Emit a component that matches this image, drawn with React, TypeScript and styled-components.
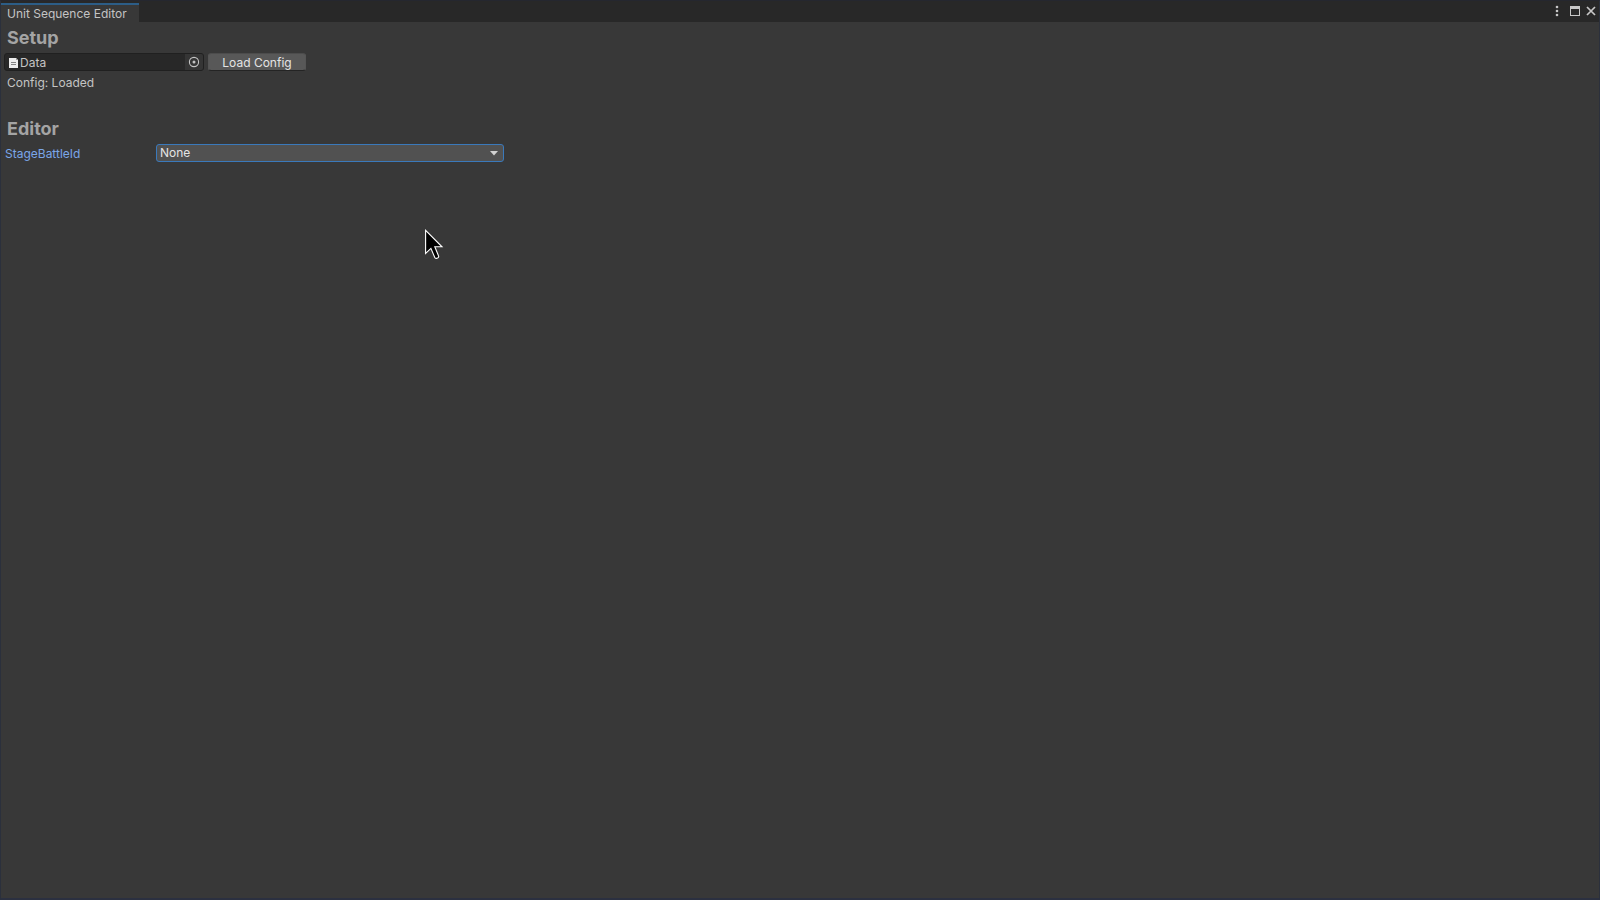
import React, { useState } from "react";
import styled, { createGlobalStyle } from "styled-components";

const GlobalStyle = createGlobalStyle`
  * { box-sizing: border-box; }
  body {
    margin: 0;
    background: #383838;
    color: #c4c4c4;
    font-family: Inter, "Liberation Sans", sans-serif;
    font-size: 12px;
    line-height: 18px;
  }
  button, input, select { font: inherit; color: inherit; margin: 0; }
`;

const Window = styled.main`
  display: flex;
  flex-direction: column;
  min-height: 100vh;
  border: 1px solid #2b303c;
  border-top-color: #25272f;
  border-bottom: 2px solid #2b3040;
`;

const TitleBar = styled.header`
  display: flex;
  justify-content: space-between;
  height: 21px;
  background: #282828;
`;

const Tab = styled.button`
  align-self: flex-end;
  height: 19px;
  width: 138px;
  padding: 0 6px;
  border: 0;
  border-top: 2px solid #2c5d87;
  background: #383838;
  text-align: left;
  line-height: 17px;
  white-space: nowrap;
`;

const WindowControls = styled.div`
  display: flex;
  align-items: flex-start;
`;

const WindowButton = styled.button`
  display: flex;
  align-items: center;
  justify-content: center;
  width: 17px;
  height: 20px;
  padding: 0;
  border: 0;
  background: none;
`;

const Section = styled.section`
  display: flex;
  flex-direction: column;
  padding: 4px 3px 21px;
`;

const Heading = styled.h2`
  margin: 0 0 3px;
  padding: 0 3px;
  color: #a4a4a4;
  font-size: 18px;
  font-weight: 700;
  line-height: 24px;
`;

const Row = styled.div`
  display: flex;
  align-items: center;
  gap: 4px;
`;

const ObjectField = styled.div`
  display: flex;
  align-items: center;
  width: 200px;
  height: 18px;
  padding-left: 4px;
  border: 1px solid #202020;
  border-radius: 3px;
  background: #282828;
`;

const ObjectInput = styled.input`
  flex: 1;
  min-width: 0;
  height: 16px;
  padding: 1px 2px 0;
  border: 0;
  outline: 0;
  background: none;
  line-height: 15px;
`;

const PickerButton = styled.button`
  display: flex;
  align-items: center;
  justify-content: center;
  width: 18px;
  height: 16px;
  padding: 0;
  border: 0;
  border-radius: 0 2px 2px 0;
  background: #353535;
`;

const ActionButton = styled.button`
  width: 98px;
  height: 18px;
  padding: 2px 0 0;
  border: 1px solid #555555;
  border-top-color: #4c4c4c;
  border-bottom-color: #242424;
  border-radius: 3px;
  background: #585858;
  color: #e4e4e4;
  line-height: 14px;
`;

const Status = styled.p`
  margin: 3px 0 0;
  padding: 0 3px;
`;

const FieldLabel = styled.label`
  width: 148px;
  padding: 2px 0 0 1px;
  color: #7ba6e8;
  line-height: 16px;
`;

const Dropdown = styled.div`
  display: grid;
  align-items: center;
  width: 348px;
  max-width: 100%;

  > * { grid-area: 1 / 1; }
  > svg {
    justify-self: end;
    margin-right: 6px;
    pointer-events: none;
  }
`;

const Select = styled.select`
  appearance: none;
  width: 100%;
  height: 18px;
  padding: 0 3px;
  border: 1px solid #3a79bb;
  border-radius: 3px;
  outline: 0;
  background: #515151;
  color: #e4e4e4;
  line-height: 16px;
`;

const Pointer = styled.svg`
  position: absolute;
  left: 425px;
  top: 229px;
  pointer-events: none;
`;

export default function App() {
  const [asset, setAsset] = useState("Data");

  return (
    <>
      <GlobalStyle />
      <Window>
        <TitleBar>
          <Tab type="button">Unit Sequence Editor</Tab>
          <WindowControls>
            <WindowButton type="button" aria-label="More options">
              <svg width="4" height="12" fill="#c8c8c8">
                <circle cx="2" cy="2" r="1.3" />
                <circle cx="2" cy="6" r="1.3" />
                <circle cx="2" cy="10" r="1.3" />
              </svg>
            </WindowButton>
            <WindowButton type="button" aria-label="Maximize">
              <svg width="12" height="10" fill="#c8c8c8">
                <path fillRule="evenodd" d="M2 0h10v10H2zM3 3v6h8V3z" />
              </svg>
            </WindowButton>
            <WindowButton type="button" aria-label="Close">
              <svg width="10" height="10" stroke="#c8c8c8" strokeWidth="1.7">
                <path d="M1 1l8 8M9 1L1 9" />
              </svg>
            </WindowButton>
          </WindowControls>
        </TitleBar>

        <Section>
          <Heading>Setup</Heading>
          <Row>
            <ObjectField>
              <svg width="9" height="12" aria-hidden="true">
                <path d="M0 2h7l2 2v8H0z" fill="#eeeeee" />
                <path d="M7 2v2h2z" fill="#a0a0a0" />
                <path d="M2 6.5h5M2 8.5h5" stroke="#858585" />
              </svg>
              <ObjectInput
                aria-label="Config asset"
                value={asset}
                onChange={(e) => setAsset(e.target.value)}
              />
              <PickerButton type="button" aria-label="Select asset">
                <svg width="12" height="12">
                  <circle cx="6" cy="6" r="4.6" fill="none" stroke="#c4c4c4" strokeWidth="1.1" />
                  <circle cx="6" cy="6" r="1.5" fill="#c4c4c4" />
                </svg>
              </PickerButton>
            </ObjectField>
            <ActionButton type="button">Load Config</ActionButton>
          </Row>
          <Status>Config: Loaded</Status>
        </Section>

        <Section>
          <Heading>Editor</Heading>
          <Row>
            <FieldLabel htmlFor="stage-battle">StageBattleId</FieldLabel>
            <Dropdown>
              <Select id="stage-battle" defaultValue="none">
                <option value="none">None</option>
              </Select>
              <svg width="8" height="5" aria-hidden="true">
                <path d="M0 0h8L4 4.6z" fill="#d2d2d2" />
              </svg>
            </Dropdown>
          </Row>
        </Section>
      </Window>
      <Pointer width="20" height="32" viewBox="0 0 20 32" aria-hidden="true">
        <path
          d="M.6 1.4V24.4L5.9 19.4L9.7 28.3Q10.2 29.8 12 29.2Q14.2 28.4 13.5 26.8L9.8 17.8H17Z"
          fill="#000000"
          stroke="#ffffff"
          strokeWidth="1.1"
        />
      </Pointer>
    </>
  );
}
